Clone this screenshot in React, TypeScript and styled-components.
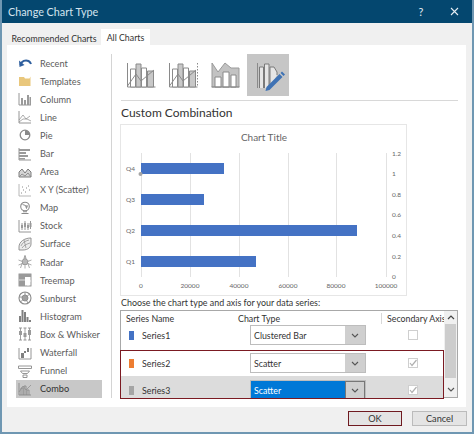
import React, { FunctionComponent, ReactNode } from 'react'
import styled, { createGlobalStyle } from 'styled-components'

const GlobalStyle = createGlobalStyle`
  html, body {
    margin: 0;
    padding: 0;
    background: #6f97b2;
  }
  * {
    box-sizing: border-box;
  }
`

const Dialog = styled.div`
  display: flex;
  flex-direction: column;
  width: 474px;
  height: 434px;
  border: 2px solid #6f97b2;
  border-top: 0;
  background: #f0f0f0;
  font-family: Lato, 'Open Sans', sans-serif;
  font-size: 9.2px;
  color: #444;
  overflow: hidden;
`

const TitleBar = styled.div`
  display: flex;
  align-items: center;
  flex: 0 0 23px;
  margin: 0 -2px;
  padding: 0 14px 0 8px;
  background: #04476f;
  color: #d5e4ee;
  font-size: 10.8px;
`

const TitleText = styled.span`
  flex: 1;
`

const TitleButton = styled.span`
  display: flex;
  justify-content: center;
  width: 12px;
  margin-left: 21px;
  color: #e4edf3;
`

const TabBar = styled.div`
  display: flex;
  align-items: flex-end;
  flex: 0 0 22px;
  padding-left: 5px;
`

const Tab = styled.div<{ $active?: boolean }>`
  display: flex;
  align-items: center;
  justify-content: center;
  height: ${p => (p.$active ? '16px' : '13px')};
  width: ${p => (p.$active ? '49px' : '94px')};
  background: ${p => (p.$active ? '#fff' : '#f0f0f0')};
  color: #333;
  font-size: 8.8px;
  white-space: nowrap;
`

const Panel = styled.div`
  display: flex;
  flex: 0 0 362px;
  margin: 0 6px 0 5px;
  background: #fff;
`

const Sidebar = styled.div`
  flex: 0 0 105px;
  min-width: 0;
  height: 344px;
  margin-top: 9px;
  padding: 0 9px;
  border-right: 1px solid #d4d4d4;
  display: grid;
  grid-template-columns: minmax(0, 1fr);
  grid-auto-rows: 18.1px;
`

const SideItem = styled.div<{ $active?: boolean }>`
  display: flex;
  align-items: center;
  gap: 6px;
  background: ${p => (p.$active ? '#c8c8c8' : 'transparent')};
  color: ${p => (p.$active ? '#333' : '#5c5c5c')};
  white-space: nowrap;
`

const Main = styled.div`
  flex: 1;
  min-width: 0;
  padding: 9px 8px 0 8px;
`

const TypeRow = styled.div`
  display: flex;
  margin-left: 1px;
  padding-bottom: 4px;
  border-bottom: 1px solid #d8d8d8;
`

const TypeButton = styled.div<{ $active?: boolean }>`
  display: flex;
  align-items: center;
  justify-content: center;
  width: 42px;
  height: 42px;
  background: ${p => (p.$active ? '#c6c6c6' : 'transparent')};
`

const Heading = styled.div`
  height: 23px;
  margin-left: 1px;
  color: #333;
  font-size: 12px;
  line-height: 24px;
`

const ChartFrame = styled.div`
  width: 287px;
  height: 172px;
  border: 1px solid #e6e6e6;
  svg {
    display: block;
    margin: -1px;
  }
`

const Prompt = styled.div`
  height: 14px;
  margin-left: 1px;
  color: #333;
  font-size: 8.9px;
  line-height: 14px;
  white-space: nowrap;
`

const SeriesTable = styled.div`
  display: flex;
  width: 338px;
  height: 88px;
  border: 1px solid #a8a8a8;
  background: #fff;
  color: #333;
`

const Rows = styled.div`
  flex: 0 0 323px;
  min-width: 0;
`

const cols = '112px 148px 1fr'

const HeaderRow = styled.div`
  display: grid;
  grid-template-columns: ${cols};
  align-items: center;
  height: 14px;
`

const HeaderCell = styled.div<{ $divider?: boolean }>`
  padding-left: 5px;
  border-left: ${p => (p.$divider ? '1px solid #d8d8d8' : '0')};
  font-size: 8.8px;
  white-space: nowrap;
`

const Row = styled.div<{ $height: number; $selected?: boolean }>`
  display: grid;
  grid-template-columns: ${cols};
  height: ${p => p.$height}px;
  background: ${p => (p.$selected ? '#dcdcdc' : 'transparent')};
  overflow: hidden;
`

const Selection = styled.div`
  margin: 0 0 -1px -1px;
  outline: 1.5px solid #7b1a22;
  outline-offset: -1.5px;
  padding-left: 1px;
  width: 324px;
  height: 49px;
`

const NameCell = styled.div<{ $top: number }>`
  display: flex;
  align-items: flex-start;
  gap: 8px;
  padding: ${p => p.$top}px 0 0 8px;
  font-size: 8.8px;
  line-height: 10px;
`

const Swatch = styled.span<{ $color: string }>`
  flex: 0 0 5px;
  height: 9px;
  background: ${p => p.$color};
`

const Combo = styled.div<{ $top: number }>`
  display: flex;
  width: 116px;
  height: 20px;
  margin: ${p => p.$top}px 0 0 17px;
  border: 1px solid #bdbdbd;
  background: #fff;
  font-size: 8.8px;
`

const ComboValue = styled.div<{ $selected?: boolean }>`
  flex: 1;
  display: flex;
  align-items: center;
  padding-left: 3px;
  background: ${p => (p.$selected ? '#0078d7' : '#fff')};
  color: ${p => (p.$selected ? '#fff' : '#333')};
`

const ComboArrow = styled.div<{ $selected?: boolean }>`
  display: flex;
  align-items: center;
  justify-content: center;
  width: 20px;
  background: #cfcfcf;
  border: ${p => (p.$selected ? '1px solid #777' : '0')};
`

const CheckCell = styled.div<{ $top: number }>`
  padding: ${p => p.$top}px 0 0 27px;
`

const CheckBox = styled.div`
  display: flex;
  align-items: center;
  justify-content: center;
  width: 10px;
  height: 10px;
  border: 1px solid #cfcfcf;
  background: #fff;
`

const ScrollBar = styled.div`
  flex: 1;
  display: flex;
  flex-direction: column;
  align-items: center;
  background: #f0f0f0;
`

const ScrollArrow = styled.div<{ $height: number }>`
  display: flex;
  align-items: center;
  justify-content: center;
  height: ${p => p.$height}px;
`

const ScrollThumb = styled.div`
  width: 11px;
  height: 54px;
  margin-bottom: 4px;
  background: #cdcdcd;
`

const Footer = styled.div`
  flex: 1;
  display: flex;
  justify-content: flex-end;
  gap: 10px;
  padding: 4px 5px 0 0;
`

const Button = styled.div<{ $primary?: boolean }>`
  display: flex;
  align-items: center;
  justify-content: center;
  width: ${p => (p.$primary ? '54px' : '55px')};
  height: 15px;
  border: ${p => (p.$primary ? '1.5px solid #6f1a20' : '1px solid #bbb')};
  background: #e4e4e4;
  color: #333;
  font-size: 9.2px;
`

const Icon: FunctionComponent<{ children: ReactNode }> = ({ children }) => (
  <svg width="18" height="18" viewBox="0 0 18 18" fill="none" stroke="#8a8a8a" strokeWidth=".9" style={{ flex: 'none' }}>
    {children}
  </svg>
)

const Bars = ({ items, fill = '#c4c4c4' }: { items: number[][]; fill?: string }) => (
  <>
    {items.map(([x, y, w, h], i) => (
      <rect key={i} x={x} y={y} width={w} height={h} fill={fill} stroke="none" />
    ))}
  </>
)

const sideIcons: Record<string, ReactNode> = {
  Recent: (
    <>
      <path d="M4.500 11c1-4 5-5.500 8-4 1.300.7 2 1.600 2.500 3" stroke="#2f5f9e" strokeWidth="2" />
      <path d="M3 6.500l.5 6.500 5-2z" fill="#2f5f9e" stroke="none" />
    </>
  ),
  Templates: (
    <path d="M3 5h5l1 1.500h4.500l1-2V14H3z" fill="#e9c77c" stroke="none" />
  ),
  Column: (
    <>
      <path d="M3 3v12h12" />
      <Bars items={[[5, 8, 2, 7], [8, 10, 2, 5], [11, 5, 2, 10], [13.500, 7, 1.500, 8]]} fill="#9a9a9a" />
    </>
  ),
  Line: (
    <>
      <path d="M3 3v12h12" />
      <path d="M3 12l4-5 3 4 4-3M3 14l4-3 4 0 4 2" strokeWidth=".7" />
    </>
  ),
  Pie: (
    <>
      <circle cx="9" cy="9" r="4.800" strokeWidth="1.300" fill="#fff" />
      <path d="M9 9V4.200a4.800 4.800 0 0 1 4.800 4.800z" fill="#8a8a8a" stroke="none" />
    </>
  ),
  Bar: (
    <>
      <path d="M3 3v12h12" />
      <Bars items={[[3, 4, 11, 2], [3, 7, 7, 2], [3, 10, 9, 2], [3, 13, 6, 1.500]]} fill="#9a9a9a" />
    </>
  ),
  Area: (
    <>
      <path d="M3 14V9l3-3 3 4 3-4 3 3v5z" fill="#d5d5d5" stroke="#707070" />
      <path d="M3 14l3-3 3 2 3-3 3 4" />
    </>
  ),
  'X Y (Scatter)': (
    <>
      <path d="M3 3v12h12" stroke="#b0b0b0" />
      <path d="M5 12h1M7 9h1M9 11h1M10 7h1M12 5h1M13 9h1M6 6h1" strokeDasharray="1 1" strokeWidth="1" />
    </>
  ),
  Map: (
    <>
      <circle cx="9" cy="7.500" r="4.300" strokeWidth="1.100" />
      <path d="M6.500 5.500l3 1 1 3 1-3" fill="#a0a0a0" />
      <path d="M5.500 14.500h7M7 12.800h4" strokeWidth="1.100" />
    </>
  ),
  Stock: (
    <>
      <path d="M3 3v12h12" />
      <path d="M6 6v7M9 4v9M12 6v7M14.500 4v8" />
      <Bars items={[[5, 8, 2, 3], [8, 6, 2, 4], [11, 8, 2, 3], [13.500, 6, 2, 4]]} fill="#9a9a9a" />
    </>
  ),
  Surface: (
    <>
      <path d="M3 12c0-5 5-9 12-9v6c0 3-3 6-8 6H3z" fill="#ececec" />
      <path d="M5 11c1-3 4-5 8-6M6 13c2-3 5-4 8-5M8 5l2 8" strokeWidth=".7" />
    </>
  ),
  Radar: (
    <>
      <path d="M9 2.500v13M2.500 7l13 5M15.500 7L2.500 12M4.500 15L9 2.500l4.500 12.500" strokeWidth=".7" />
      <path d="M9 5.500l3 2L11 11.500H7L6 7.500z" fill="#b8b8b8" stroke="#9a9a9a" />
    </>
  ),
  Treemap: (
    <>
      <rect x="3" y="3" width="12" height="12" />
      <Bars items={[[3, 3, 6, 6], [3, 9, 6, 6], [9, 3, 6, 3]]} fill="#9a9a9a" />
      <path d="M12 6v9M9 10h6M3 9h6" stroke="#fff" strokeWidth=".7" />
    </>
  ),
  Sunburst: (
    <>
      <circle cx="9" cy="9" r="6" strokeWidth="1.100" />
      <circle cx="9" cy="9" r="3" fill="#a0a0a0" />
      <path d="M9 3v3M13.500 5l-2.500 2.500M4.500 13l2-2M3 8h3M12 14l-1.500-2.500" />
    </>
  ),
  Histogram: <Bars items={[[3, 9, 2, 6], [5.500, 3, 2, 12], [8, 5, 2, 10], [10.500, 10, 2, 5], [13, 13, 2, 2]]} fill="#808080" />,
  'Box & Whisker': (
    <>
      <path d="M4.500 3v12M9 3v12M13.500 3v12" strokeWidth=".8" />
      <Bars items={[[3, 6, 3, 4], [7.500, 8, 3, 4], [12, 5, 3, 5]]} fill="#9a9a9a" />
      <path d="M3 3h3M7.500 3h3M12 3h3M3 15h3M7.500 15h3M12 15h3" />
    </>
  ),
  Waterfall: (
    <>
      <path d="M3 4v11h12V4" />
      <Bars items={[[5, 9, 3, 5], [8, 7, 2, 2], [11, 4, 2, 4]]} fill="#808080" />
    </>
  ),
  Funnel: <path d="M2.500 4h13v2.500h-13zM4.500 9h9l-2 2.500h-5zM7 13h4v2.500H7z" />,
  Combo: (
    <>
      <path d="M3 3v12h12" />
      <path d="M5 15V8h2v7M8 15V6h2v9M11 15v-5h2v5" />
      <path d="M3 12l4-6 3 4 5-5" strokeWidth=".7" />
    </>
  )
}

const sideNames = Object.keys(sideIcons)

const TypeIcon = ({ kind }: { kind: number }) => {
  if (kind === 3) {
    return (
      <svg width="42" height="42" viewBox="0 0 42 42" fill="none" stroke="#7a7a7a">
        <path d="M10.500 9v25" stroke="#8a8a8a" />
        <path d="M12.500 34V13h4v21M17.500 34V10h4.500v24M23 34V13h4l3 5v3" fill="#e6e6e6" />
        <path d="M18.500 37l1-4 13-13 3 3-13 13z" fill="#3f72b4" stroke="none" />
        <path d="M33.500 19l1.500-1.500 3 3L36.500 22z" fill="#3f72b4" stroke="none" />
      </svg>
    )
  }
  if (kind === 2) {
    return (
      <svg width="30" height="30" viewBox="0 0 30 30" fill="none" stroke="#8a8a8a">
        <path d="M1 3l6 9 7-9 6 5h8v19H1z" fill="#c2c2c2" stroke="#9a9a9a" />
        <path d="M4 27V17h6v10zM12 27V12h6v15zM20 27V15h5v12z" fill="#fff" />
        <path d="M.500 27h28" />
      </svg>
    )
  }
  return (
    <svg width="30" height="30" viewBox="0 0 30 30" fill="none" stroke="#8a8a8a">
      <path d="M.500 3v24h28" />
      {kind === 1 && <path d="M28.500 3v24" strokeDasharray="1.500 1.500" />}
      <path d="M3.500 27V9h5v18zM14.500 27V8h5v19z" fill="#fff" />
      <path d="M9 27V4h5v23zM20.500 27V11h6v16z" fill="#c8c8c8" />
      <path d="M.500 26L9 14l5 7 13-11" strokeWidth="1" />
    </svg>
  )
}

const ChartText = styled.text`
  font-family: Lato, 'Open Sans', sans-serif;
  fill: #666;
`

const gridLines = [21, 70, 119, 168, 216, 266]
const xLabels = ['0', '20000', '40000', '60000', '80000', '100000']
const yLabels = ['Q4', 'Q3', 'Q2', 'Q1']
const bars = [
  { y: 39, w: 83 },
  { y: 70, w: 63 },
  { y: 101, w: 216 },
  { y: 132, w: 115 }
]
const rightLabels = ['1.2', '1', '0.8', '0.6', '0.4', '0.2', '0']

const Chart = () => (
  <svg width="287" height="172" viewBox="0 0 287 172">
    <ChartText x="144" y="17" textAnchor="middle" fontSize="10">Chart Title</ChartText>
    {gridLines.map(x => (
      <line key={x} x1={x + 0.5} x2={x + 0.5} y1="29" y2="153" stroke="#e2e2e2" />
    ))}
    {bars.map((b, i) => (
      <g key={i}>
        <rect x="21" y={b.y} width={b.w} height="11" fill="#4472c4" />
        <ChartText x="6" y={b.y + 8} fontSize="6.500">{yLabels[i]}</ChartText>
      </g>
    ))}
    <circle cx="20.500" cy="50" r="2" fill="#a5a5a5" />
    {xLabels.map((l, i) => (
      <ChartText key={l} x={gridLines[i]} y="163.500" textAnchor="middle" fontSize="6.500">{l}</ChartText>
    ))}
    {rightLabels.map((l, i) => (
      <ChartText key={l} x="272" y={31.500 + i * 20.600} fontSize="6.500">{l}</ChartText>
    ))}
  </svg>
)

const Chevron = () => (
  <svg width="8" height="5" viewBox="0 0 8 5" fill="none" stroke="#555" strokeWidth="1.100">
    <path d="M1 1l3 3 3-3" />
  </svg>
)

const Check = () => (
  <svg width="8" height="8" viewBox="0 0 8 8" fill="none" stroke="#b0b0b0" strokeWidth="1.200">
    <path d="M1 4l2 2.500L7.500 1" />
  </svg>
)

interface SeriesRowProps {
  name: string
  color: string
  type: string
  height: number
  comboTop: number
  checked?: boolean
  selected?: boolean
}

const SeriesRow: FunctionComponent<SeriesRowProps> = ({ name, color, type, height, comboTop, checked, selected }) => (
  <Row $height={height} $selected={selected}>
    <NameCell $top={comboTop + 6}>
      <Swatch $color={color} />
      {name}
    </NameCell>
    <div>
      <Combo $top={comboTop}>
        <ComboValue $selected={selected}>{type}</ComboValue>
        <ComboArrow $selected={selected}><Chevron /></ComboArrow>
      </Combo>
    </div>
    <CheckCell $top={comboTop + 5}>
      <CheckBox>{checked && <Check />}</CheckBox>
    </CheckCell>
  </Row>
)

export default function App() {
  return (
    <>
      <GlobalStyle />
      <Dialog>
        <TitleBar>
          <TitleText>Change Chart Type</TitleText>
          <TitleButton>?</TitleButton>
          <TitleButton>
            <svg width="9" height="9" viewBox="0 0 9 9" stroke="#e4edf3" strokeWidth="1.100">
              <path d="M1 1l7 7M8 1L1 8" />
            </svg>
          </TitleButton>
        </TitleBar>
        <TabBar>
          <Tab>Recommended Charts</Tab>
          <Tab $active>All Charts</Tab>
        </TabBar>
        <Panel>
          <Sidebar>
            {sideNames.map(n => (
              <SideItem key={n} $active={n === 'Combo'}>
                <Icon>{sideIcons[n]}</Icon>
                {n}
              </SideItem>
            ))}
          </Sidebar>
          <Main>
            <TypeRow>
              {[0, 1, 2, 3].map(k => (
                <TypeButton key={k} $active={k === 3}>
                  <TypeIcon kind={k} />
                </TypeButton>
              ))}
            </TypeRow>
            <Heading>Custom Combination</Heading>
            <ChartFrame>
              <Chart />
            </ChartFrame>
            <Prompt>Choose the chart type and axis for your data series:</Prompt>
            <SeriesTable>
              <Rows>
                <HeaderRow>
                  <HeaderCell>Series Name</HeaderCell>
                  <HeaderCell>Chart Type</HeaderCell>
                  <HeaderCell $divider>Secondary Axis</HeaderCell>
                </HeaderRow>
                <SeriesRow name="Series1" color="#4472c4" type="Clustered Bar" height={25} comboTop={0} />
                <Selection>
                  <SeriesRow name="Series2" color="#ed7d31" type="Scatter" height={26} comboTop={3} checked />
                  <SeriesRow name="Series3" color="#a5a5a5" type="Scatter" height={23} comboTop={4} checked selected />
                </Selection>
              </Rows>
              <ScrollBar>
                <ScrollArrow $height={13}>
                  <svg width="8" height="5" viewBox="0 0 8 5" fill="none" stroke="#444" strokeWidth="1.200"><path d="M1 4l3-3 3 3" /></svg>
                </ScrollArrow>
                <ScrollThumb />
                <ScrollArrow $height={15}><Chevron /></ScrollArrow>
              </ScrollBar>
            </SeriesTable>
          </Main>
        </Panel>
        <Footer>
          <Button $primary>OK</Button>
          <Button>Cancel</Button>
        </Footer>
      </Dialog>
    </>
  )
}
